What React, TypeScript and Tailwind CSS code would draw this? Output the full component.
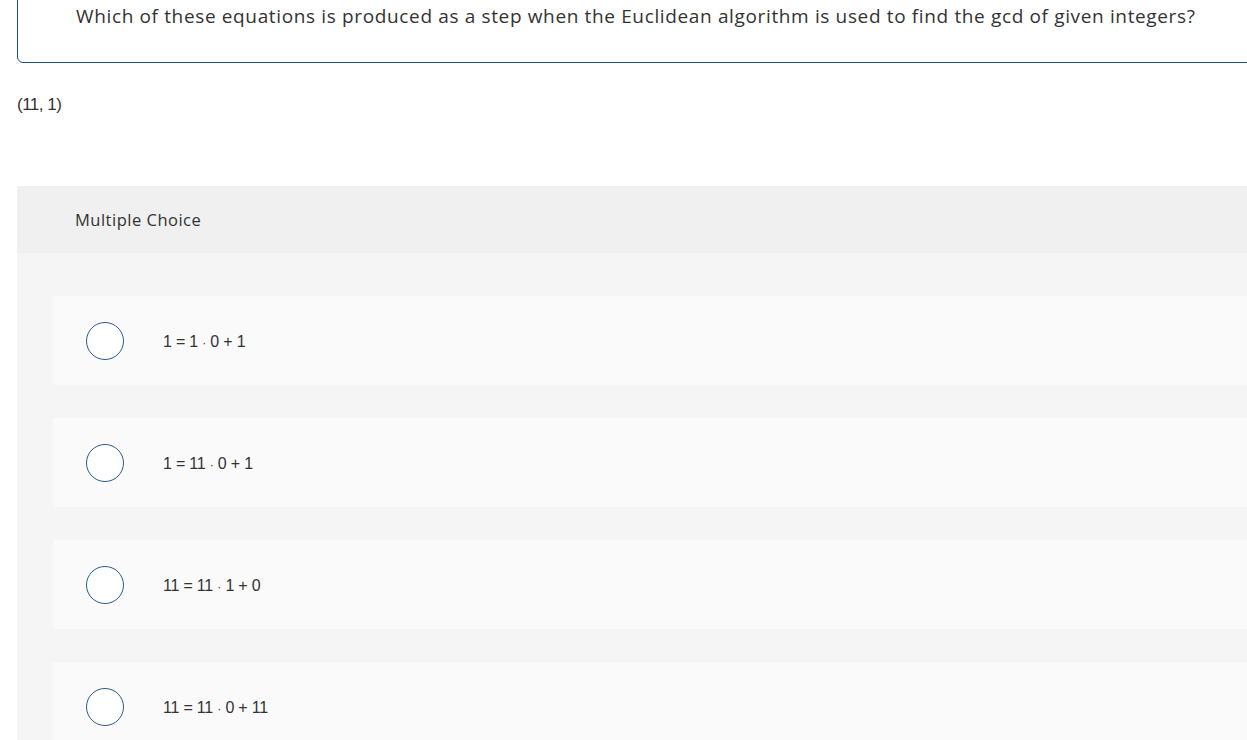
const options = [
  ["1", "1", "0", "1"],
  ["1", "11", "0", "1"],
  ["11", "11", "1", "0"],
  ["11", "11", "0", "11"],
];

const Equation = ({ parts }: { parts: string[] }) => {
  const [a, b, c, d] = parts;
  return (
    <span className="font-['Liberation_Sans',Arial,sans-serif] text-[16px] text-[#333] tracking-[-0.2px]">
      {a} = {b} <span className="relative top-[0px] text-[12px]">·</span> {c} + {d}
    </span>
  );
};

export default function App() {
  return (
    <div className="w-[1247px] h-[740px] overflow-hidden bg-white font-['Open_Sans','Liberation_Sans',sans-serif]">
      {/* question box, top is cut off */}
      <div className="mt-[-30px] ml-[17px] mr-[-20px] border border-[#1d4f86] rounded-bl-[6px] pt-[33px] pb-[34px] pl-[58px]">
        <p className="text-[19px] leading-[24px] text-[#333] tracking-[0.64px]">
          Which of these equations is produced as a step when the Euclidean algorithm is used to find the gcd of given integers?
        </p>
      </div>

      <p className="mt-[30px] ml-[17px] font-['Liberation_Sans',Arial,sans-serif] text-[17px] leading-[24px] text-[#333] tracking-[-0.5px]">
        (11, 1)
      </p>

      {/* multiple choice panel */}
      <div className="mt-[69px] ml-[17px] mr-[-20px] bg-[#f5f5f5]">
        <div className="h-[67px] bg-[#f0f0f0] flex items-center pl-[58px] pt-[2px]">
          <span className="text-[16.5px] text-[#333] tracking-[0.5px]">Multiple Choice</span>
        </div>
        <div className="pt-[43px] pl-[36px] flex flex-col gap-[33px]">
          {options.map((o, i) => (
            <div key={i} className="h-[89px] bg-[#fafafa] flex items-center pl-[33px]">
              <div className="w-[38px] h-[38px] rounded-full border-[1.5px] border-[#2b5b8e] bg-white shrink-0" />
              <div className="ml-[39px] pt-[1px]">
                <Equation parts={o} />
              </div>
            </div>
          ))}
        </div>
      </div>
    </div>
  );
}
